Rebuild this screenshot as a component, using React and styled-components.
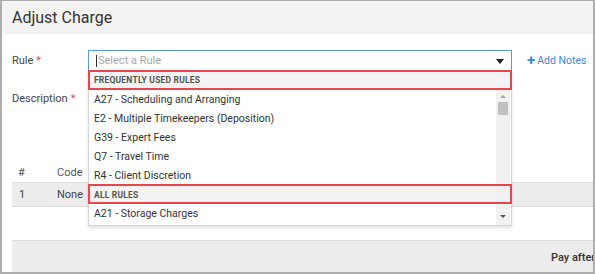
import styled, { createGlobalStyle } from 'styled-components';

const Global = createGlobalStyle`
  html, body { margin: 0; padding: 0; background: #fff; }
  body { font-family: Roboto, "Liberation Sans", Arial, sans-serif; }
  * { box-sizing: border-box; }
`;

const Frame = styled.div`
  width: 595px;
  height: 274px;
  border: 1px solid #adadad;
  border-left-width: 2px;
  border-right-width: 2px;
  border-bottom-width: 2px;
  overflow: hidden;
  background: #fff;
  position: relative;
`;

const Header = styled.div`
  height: 33px;
  background: #f3f3f3;
  display: flex;
  align-items: center;
  padding-left: 10px;
  font-size: 16px;
  color: #333;
`;

const Body = styled.div`
  padding: 16px 0 0 10px;
`;

const FormRow = styled.div`
  display: flex;
  align-items: center;
  height: 21px;
  margin-top: ${p => p.$gap || 0}px;
`;

const Label = styled.div`
  width: 76px;
  font-size: 11px;
  color: #444;
  span { color: #d9534f; margin-left: 3px; }
`;

const SelectWrap = styled.div`
  position: relative;
  width: 424px;
  height: 21px;
`;

const SelectBox = styled.div`
  height: 21px;
  border: 1px solid #5b9bd5;
  display: flex;
  align-items: center;
  padding-left: 7px;
  font-size: 11px;
  color: #aaa;
  position: relative;
  &::before {
    content: '';
    width: 1px;
    height: 12px;
    background: #333;
    margin-right: 1px;
  }
`;

const Arrow = styled.div`
  position: absolute;
  right: 7px;
  top: 8px;
  width: 0;
  height: 0;
  border-left: 4px solid transparent;
  border-right: 4px solid transparent;
  border-top: 5px solid #222;
`;

const Dropdown = styled.div`
  position: absolute;
  top: 20px;
  left: 0;
  width: 424px;
  height: 156px;
  background: #fff;
  border: 1px solid #d6d6d6;
  border-top: none;
  box-shadow: 0 2px 3px rgba(0,0,0,0.12);
  z-index: 5;
  display: flex;
  flex-direction: column;
`;

const GroupHead = styled.div`
  height: ${p => p.$h || 19}px;
  background: #f3f3f3;
  display: flex;
  align-items: center;
  padding-left: 5px;
  font-size: 8.5px;
  font-weight: 700;
  color: #555;
  letter-spacing: 0.2px;
`;

const ListArea = styled.div`
  flex: 1;
  display: flex;
  overflow: hidden;
`;

const Items = styled.div`
  flex: 1;
  display: flex;
  flex-direction: column;
`;

const Item = styled.div`
  height: 19px;
  display: flex;
  align-items: center;
  padding-left: 5px;
  font-size: 10.5px;
  color: #333;
  white-space: nowrap;
`;

const Scrollbar = styled.div`
  width: 14px;
  background: #f1f1f1;
  display: flex;
  flex-direction: column;
  align-items: center;
  padding-top: 5px;
  margin-right: 1px;
`;

const ScrollArrow = styled.div`
  width: 0;
  height: 0;
  border-left: 3px solid transparent;
  border-right: 3px solid transparent;
  ${p => p.$down ? 'border-top: 3px solid #555;' : 'border-bottom: 3px solid #a3a3a3;'}
  margin-top: ${p => p.$down ? 'auto' : '0'};
  margin-bottom: ${p => p.$down ? '7px' : '0'};
`;

const Thumb = styled.div`
  width: 10px;
  height: 13px;
  background: #c1c1c1;
  margin-top: 4px;
`;

const Highlight = styled.div`
  position: absolute;
  left: 0;
  width: 424px;
  top: ${p => p.$top}px;
  height: ${p => p.$h}px;
  border: 2px solid #ea4450;
  z-index: 6;
  pointer-events: none;
`;

const AddNotes = styled.div`
  margin-left: 15px;
  display: flex;
  align-items: center;
  gap: 2px;
  font-size: 10.5px;
  color: #3b8ad8;
  b { font-size: 15px; font-weight: 700; line-height: 11px; }
`;

const Table = styled.div`
  margin-top: 53px;
`;

const THead = styled.div`
  display: flex;
  align-items: center;
  height: 20px;
  font-size: 11px;
  font-weight: 700;
  color: #555;
`;

const TRow = styled.div`
  display: flex;
  align-items: center;
  height: 25px;
  background: #ececec;
  border-top: 1px solid #e0e0e0;
  border-bottom: 1px solid #dcdcdc;
  font-size: 11px;
  color: #444;
`;

const Cell = styled.div`
  width: ${p => p.$w}px;
  padding-left: ${p => p.$pl || 0}px;
  font-weight: ${p => p.$bold ? 700 : 400};
`;

const Footer = styled.div`
  margin-top: 33px;
  height: 34px;
  background: #ececec;
  border-top: 1px solid #dedede;
  display: flex;
  align-items: center;
  padding-left: 539px;
  font-size: 11px;
  font-weight: 500;
  color: #333;
  white-space: nowrap;
  overflow: hidden;
`;

const frequent = [
  'A27 - Scheduling and Arranging',
  'E2 - Multiple Timekeepers (Deposition)',
  'G39 - Expert Fees',
  'Q7 - Travel Time',
  'R4 - Client Discretion',
];

export default function App() {
  return (
    <>
      <Global />
      <Frame>
        <Header>Adjust Charge</Header>
        <Body>
          <FormRow>
            <Label>Rule<span>*</span></Label>
            <SelectWrap>
              <SelectBox>
                Select a Rule
                <Arrow />
              </SelectBox>
              <Dropdown>
                <GroupHead $h={20}>FREQUENTLY USED RULES</GroupHead>
                <ListArea>
                  <Items>
                    {frequent.map(r => <Item key={r}>{r}</Item>)}
                    <GroupHead>ALL RULES</GroupHead>
                    <Item>A21 - Storage Charges</Item>
                  </Items>
                  <Scrollbar>
                    <ScrollArrow />
                    <Thumb />
                    <ScrollArrow $down />
                  </Scrollbar>
                </ListArea>
              </Dropdown>
              <Highlight $top={20} $h={20} />
              <Highlight $top={134} $h={20} />
            </SelectWrap>
            <AddNotes><b>+</b>Add Notes</AddNotes>
          </FormRow>
          <FormRow $gap={17}>
            <Label>Description<span>*</span></Label>
          </FormRow>
          <Table>
            <THead>
              <Cell $w={45} $pl={6}>#</Cell>
              <Cell $w={60}>Code</Cell>
            </THead>
            <TRow>
              <Cell $w={45} $pl={7}>1</Cell>
              <Cell $w={60}>None</Cell>
            </TRow>
          </Table>
          <Footer>Pay after adjustment</Footer>
        </Body>
      </Frame>
    </>
  );
}
